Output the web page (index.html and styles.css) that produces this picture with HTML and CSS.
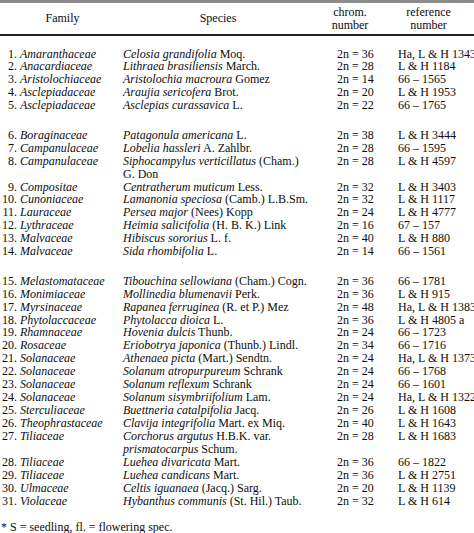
FILE: index.html
```html
<!DOCTYPE html>
<html>
<head>
<meta charset="utf-8">
<link rel="stylesheet" href="styles.css">
</head>
<body>
<div class="page">
  <div class="toprule"></div>
  <div class="head">
    <div class="h-family">Family</div>
    <div class="h-species">Species</div>
    <div class="h-chrom">chrom.<br>number</div>
    <div class="h-ref">reference<br>number</div>
  </div>
  <div class="headrule"></div>
  <div class="rows">
    <div class="row"><span class="n">1.</span><span class="f">Amaranthaceae</span><span class="s"><i>Celosia grandifolia</i> Moq.</span><span class="c">2n = 36</span><span class="r">Ha, L &amp; H 1343</span></div>
    <div class="row"><span class="n">2.</span><span class="f">Anacardiaceae</span><span class="s"><i>Lithraea brasiliensis</i> March.</span><span class="c">2n = 28</span><span class="r">L &amp; H 1184</span></div>
    <div class="row"><span class="n">3.</span><span class="f">Aristolochiaceae</span><span class="s"><i>Aristolochia macroura</i> Gomez</span><span class="c">2n = 14</span><span class="r">66 – 1565</span></div>
    <div class="row"><span class="n">4.</span><span class="f">Asclepiadaceae</span><span class="s"><i>Araujia sericofera</i> Brot.</span><span class="c">2n = 20</span><span class="r">L &amp; H 1953</span></div>
    <div class="row"><span class="n">5.</span><span class="f">Asclepiadaceae</span><span class="s"><i>Asclepias curassavica</i> L.</span><span class="c">2n = 22</span><span class="r">66 – 1765</span></div>
    <div class="row gap"><span class="n">6.</span><span class="f">Boraginaceae</span><span class="s"><i>Patagonula americana</i> L.</span><span class="c">2n = 38</span><span class="r">L &amp; H 3444</span></div>
    <div class="row"><span class="n">7.</span><span class="f">Campanulaceae</span><span class="s"><i>Lobelia hassleri</i> A. Zahlbr.</span><span class="c">2n = 28</span><span class="r">66 – 1595</span></div>
    <div class="row"><span class="n">8.</span><span class="f">Campanulaceae</span><span class="s"><i>Siphocampylus verticillatus</i> (Cham.)<br>G. Don</span><span class="c">2n = 28</span><span class="r">L &amp; H 4597</span></div>
    <div class="row"><span class="n">9.</span><span class="f">Compositae</span><span class="s"><i>Centratherum muticum</i> Less.</span><span class="c">2n = 32</span><span class="r">L &amp; H 3403</span></div>
    <div class="row"><span class="n">10.</span><span class="f">Cunoniaceae</span><span class="s"><i>Lamanonia speciosa</i> (Camb.) L.B.Sm.</span><span class="c">2n = 32</span><span class="r">L &amp; H 1117</span></div>
    <div class="row"><span class="n">11.</span><span class="f">Lauraceae</span><span class="s"><i>Persea major</i> (Nees) Kopp</span><span class="c">2n = 24</span><span class="r">L &amp; H 4777</span></div>
    <div class="row"><span class="n">12.</span><span class="f">Lythraceae</span><span class="s"><i>Heimia salicifolia</i> (H. B. K.) Link</span><span class="c">2n = 16</span><span class="r">67 – 157</span></div>
    <div class="row"><span class="n">13.</span><span class="f">Malvaceae</span><span class="s"><i>Hibiscus sororius</i> L. f.</span><span class="c">2n = 40</span><span class="r">L &amp; H 880</span></div>
    <div class="row"><span class="n">14.</span><span class="f">Malvaceae</span><span class="s"><i>Sida rhombifolia</i> L.</span><span class="c">2n = 14</span><span class="r">66 – 1561</span></div>
    <div class="row gap"><span class="n">15.</span><span class="f">Melastomataceae</span><span class="s"><i>Tibouchina sellowiana</i> (Cham.) Cogn.</span><span class="c">2n = 36</span><span class="r">66 – 1781</span></div>
    <div class="row"><span class="n">16.</span><span class="f">Monimiaceae</span><span class="s"><i>Mollinedia blumenavii</i> Perk.</span><span class="c">2n = 36</span><span class="r">L &amp; H 915</span></div>
    <div class="row"><span class="n">17.</span><span class="f">Myrsinaceae</span><span class="s"><i>Rapanea ferruginea</i> (R. et P.) Mez</span><span class="c">2n = 48</span><span class="r">Ha, L &amp; H 1383</span></div>
    <div class="row"><span class="n">18.</span><span class="f">Phytolaccaceae</span><span class="s"><i>Phytolacca dioica</i> L.</span><span class="c">2n = 36</span><span class="r">L &amp; H 4805 a</span></div>
    <div class="row"><span class="n">19.</span><span class="f">Rhamnaceae</span><span class="s"><i>Hovenia dulcis</i> Thunb.</span><span class="c">2n = 24</span><span class="r">66 – 1723</span></div>
    <div class="row"><span class="n">20.</span><span class="f">Rosaceae</span><span class="s"><i>Eriobotrya japonica</i> (Thunb.) Lindl.</span><span class="c">2n = 34</span><span class="r">66 – 1716</span></div>
    <div class="row"><span class="n">21.</span><span class="f">Solanaceae</span><span class="s"><i>Athenaea picta</i> (Mart.) Sendtn.</span><span class="c">2n = 24</span><span class="r">Ha, L &amp; H 1373</span></div>
    <div class="row"><span class="n">22.</span><span class="f">Solanaceae</span><span class="s"><i>Solanum atropurpureum</i> Schrank</span><span class="c">2n = 24</span><span class="r">66 – 1768</span></div>
    <div class="row"><span class="n">23.</span><span class="f">Solanaceae</span><span class="s"><i>Solanum reflexum</i> Schrank</span><span class="c">2n = 24</span><span class="r">66 – 1601</span></div>
    <div class="row"><span class="n">24.</span><span class="f">Solanaceae</span><span class="s"><i>Solanum sisymbriifolium</i> Lam.</span><span class="c">2n = 24</span><span class="r">Ha, L &amp; H 1322</span></div>
    <div class="row"><span class="n">25.</span><span class="f">Sterculiaceae</span><span class="s"><i>Buettneria catalpifolia</i> Jacq.</span><span class="c">2n = 26</span><span class="r">L &amp; H 1608</span></div>
    <div class="row"><span class="n">26.</span><span class="f">Theophrastaceae</span><span class="s"><i>Clavija integrifolia</i> Mart. ex Miq.</span><span class="c">2n = 40</span><span class="r">L &amp; H 1643</span></div>
    <div class="row"><span class="n">27.</span><span class="f">Tiliaceae</span><span class="s"><i>Corchorus argutus</i> H.B.K. var.<br><i>prismatocarpus</i> Schum.</span><span class="c">2n = 28</span><span class="r">L &amp; H 1683</span></div>
    <div class="row"><span class="n">28.</span><span class="f">Tiliaceae</span><span class="s"><i>Luehea divaricata</i> Mart.</span><span class="c">2n = 36</span><span class="r">66 – 1822</span></div>
    <div class="row"><span class="n">29.</span><span class="f">Tiliaceae</span><span class="s"><i>Luehea candicans</i> Mart.</span><span class="c">2n = 36</span><span class="r">L &amp; H 2751</span></div>
    <div class="row"><span class="n">30.</span><span class="f">Ulmaceae</span><span class="s"><i>Celtis iguanaea</i> (Jacq.) Sarg.</span><span class="c">2n = 20</span><span class="r">L &amp; H 1139</span></div>
    <div class="row"><span class="n">31.</span><span class="f">Violaceae</span><span class="s"><i>Hybanthus communis</i> (St. Hil.) Taub.</span><span class="c">2n = 32</span><span class="r">L &amp; H 614</span></div>
  </div>
  <div class="foot">* S = seedling, fl. = flowering spec.</div>
</div>
</body>
</html>
```
FILE: styles.css
```css
html, body {
  margin: 0;
  padding: 0;
  background: #fff;
  overflow: hidden;
}
.page {
  width: 474px;
  font-family: "Liberation Serif", "Times New Roman", serif;
  font-size: 12px;
  color: #0d0d0d;
}
.toprule {
  height: 3px;
  background: #8c8c8c;
}
.head {
  display: grid;
  grid-template-columns: 125px 186px 78px 1fr;
  align-items: center;
  height: 31px;
  font-size: 12px;
  line-height: 13px;
  text-align: center;
}
.h-ref { padding-right: 6px; }
.headrule {
  height: 2px;
  background: #222;
}
.rows {
  padding-top: 11.5px;
}
.row {
  display: grid;
  grid-template-columns: 17px 106px 214px 61px 1fr;
  line-height: 12.95px;
  white-space: nowrap;
}
.row.gap {
  margin-top: 16.45px;
}
.n { text-align: right; }
.f { font-style: italic; padding-left: 3px; }
.foot {
  margin-top: 13px;
  line-height: 12.95px;
  padding-left: 1px;
}
```
